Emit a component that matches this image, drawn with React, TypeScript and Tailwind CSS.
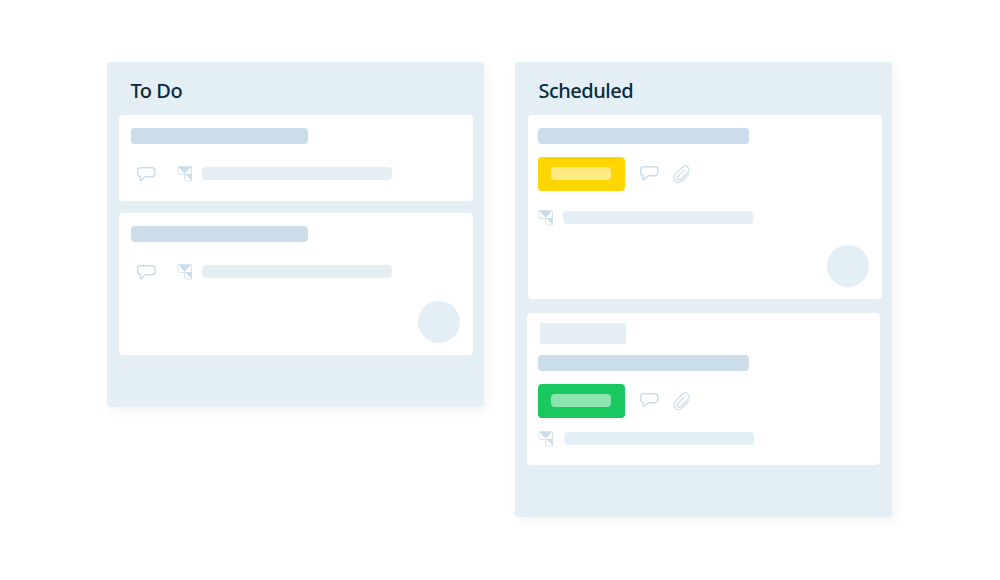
import type { ReactNode } from "react"

function CommentIcon() {
  return (
    <svg width="20" height="16" viewBox="0 0 20 16" fill="none" stroke="#cbdde9" strokeWidth="1.5" strokeLinejoin="round">
      <path d="M4.600 1.700h11.200c2.200 0 3.100 1.100 3.100 3v3.100c0 1.900-.9 3-3.100 3H9.900c-1.900.2-3 2.200-5.100 4l-.5-.3v-3.800C2.500 10.300 1.700 9.500 1.700 7.700V4.600c0-1.800.9-2.900 2.900-2.900Z" />
    </svg>
  )
}

function ClipIcon() {
  return (
    <svg width="18" height="18" viewBox="1 0 22.5 22.5" fill="none" stroke="#cbdde9" strokeWidth="1.5" strokeLinecap="round" strokeLinejoin="round">
      <path d="M20.800 11.050l-8.550 9.190a6 6 0 0 1-8.490-8.490l9.190-9.190a4.700 4.700 0 0 1 6.650 6.650l-8.990 9.190a2.700 2.700 0 0 1-3.830-3.830l8.490-8.480" />
    </svg>
  )
}

function LogoIcon() {
  return (
    <svg width="15" height="16" viewBox="0 0 15 16" fill="none">
      <path d="M1 .7H14.500V15H9Q7.500 15 7.500 13.500V8.500H2.500Q1 8.500 1 7Z" stroke="#d6e4ee" strokeWidth="1" />
      <path d="M7.500 8.500H14.500" stroke="#d6e4ee" strokeWidth="1" />
      <path d="M1.200.7h13L7.700 7.800Z" fill="#cbdde9" />
      <path d="M8.300 8h6.200v6.500Z" fill="#cbdde9" />
    </svg>
  )
}

function Column({ title, className, children }: { title: string; className: string; children: ReactNode }) {
  return (
    <section className={`w-[377px] rounded-[4px] bg-[#e4eef5] shadow-[3px_4px_12px_rgba(0,0,0,0.05)] ${className}`}>
      <h2 className="h-[53px] pt-[15px] pl-[23.5px] font-['Noto_Sans'] text-[20px] leading-7 font-medium tracking-[-0.5px] text-[#0b2b3a]">
        {title}
      </h2>
      {children}
    </section>
  )
}

function TodoCard({ className }: { className: string }) {
  return (
    <div className={`ml-3 w-[354px] rounded-[4px] bg-white pt-[13px] pl-[12px] ${className}`}>
      <div className="h-4 w-[177px] rounded-[4px] bg-[#cbdde9]" />
      <div className="mt-[22px] flex h-4 items-start pl-[5px]">
        <CommentIcon />
        <div className="ml-[21px]">
          <LogoIcon />
        </div>
        <div className="mt-px ml-[10px] h-[13px] w-[190px] rounded-[4px] bg-[#e4eef5]" />
      </div>
    </div>
  )
}

function StatusRow({ color }: { color: string }) {
  return (
    <div className="mt-[13px] flex h-[34px] items-start">
      <div className={`h-[34px] w-[87px] rounded-[4px] pt-[10px] pl-[13px] ${color}`}>
        <div className="h-[13px] w-[60px] rounded-[4px] bg-white/50" />
      </div>
      <div className="mt-2 ml-[14px]">
        <CommentIcon />
      </div>
      <div className="mt-2 ml-[14px]">
        <ClipIcon />
      </div>
    </div>
  )
}

export default function App() {
  return (
    <main className="flex h-[580px] w-[1000px] items-start gap-[31px] bg-white pt-[62px] pl-[107px]">
      <Column title="To Do" className="h-[345px]">
        <TodoCard className="h-[86px]" />
        <div className="relative mt-[12px]">
          <TodoCard className="h-[142px]" />
          <div className="absolute right-[24px] bottom-[12px] size-[42px] rounded-full bg-[#e4eef5]" />
        </div>
      </Column>

      <Column title="Scheduled" className="h-[455px]">
        <div className="relative ml-[13px] h-[184px] w-[354px] rounded-[4px] bg-white pt-[13px] pl-[10px]">
          <div className="h-4 w-[211px] rounded-[4px] bg-[#cbdde9]" />
          <StatusRow color="bg-[#ffd602]" />
          <div className="mt-[19px] flex h-4 items-start">
            <LogoIcon />
            <div className="mt-px ml-[10px] h-[13px] w-[190px] rounded-[4px] bg-[#e4eef5]" />
          </div>
          <div className="absolute right-[13px] bottom-[12px] size-[42px] rounded-full bg-[#e4eef5]" />
        </div>

        <div className="mt-[14px] ml-3 h-[152px] w-[353px] rounded-[4px] bg-white pt-[10px] pl-[11px]">
          <div className="ml-[2px] h-[21px] w-[86px] rounded-[1px] bg-[#e4eef5]" />
          <div className="mt-[11px] h-4 w-[211px] rounded-[4px] bg-[#cbdde9]" />
          <StatusRow color="bg-[#19c95f]" />
          <div className="mt-[13px] flex h-4 items-start">
            <LogoIcon />
            <div className="mt-px ml-[11px] h-[13px] w-[190px] rounded-[4px] bg-[#e4eef5]" />
          </div>
        </div>
      </Column>
    </main>
  )
}
